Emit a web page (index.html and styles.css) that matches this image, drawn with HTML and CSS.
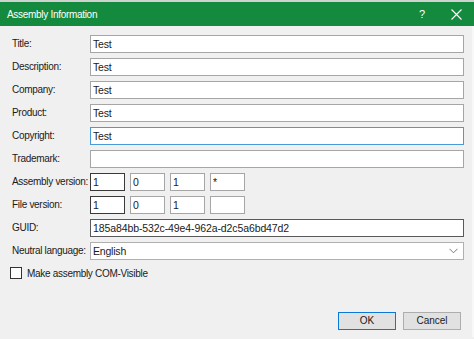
FILE: index.html
```html
<!DOCTYPE html>
<html>
<head>
<meta charset="utf-8">
<link rel="stylesheet" href="styles.css">
</head>
<body>
<div class="dialog">
  <div class="titlebar">
    <span class="title">Assembly Information</span>
    <span class="help">?</span>
    <span class="close"><svg width="11" height="11" viewBox="0 0 11 11"><path d="M0.5 0.5 L10.5 10.5 M10.5 0.5 L0.5 10.5" stroke="#fff" stroke-width="1.1" fill="none"/></svg></span>
  </div>
  <div class="content">
    <div class="form">
      <label class="lbl">Title:</label>
      <div class="field">Test</div>
      <label class="lbl">Description:</label>
      <div class="field">Test</div>
      <label class="lbl">Company:</label>
      <div class="field">Test</div>
      <label class="lbl">Product:</label>
      <div class="field">Test</div>
      <label class="lbl">Copyright:</label>
      <div class="field focus">Test</div>
      <label class="lbl">Trademark:</label>
      <div class="field"></div>
      <label class="lbl">Assembly version:</label>
      <div class="versions">
        <div class="vbox dark">1</div>
        <div class="vbox">0</div>
        <div class="vbox">1</div>
        <div class="vbox">*</div>
      </div>
      <label class="lbl">File version:</label>
      <div class="versions">
        <div class="vbox dark">1</div>
        <div class="vbox">0</div>
        <div class="vbox">1</div>
        <div class="vbox"></div>
      </div>
      <label class="lbl">GUID:</label>
      <div class="field dark">185a84bb-532c-49e4-962a-d2c5a6bd47d2</div>
      <label class="lbl">Neutral language:</label>
      <div class="field select"><span>English</span><svg width="9" height="6" viewBox="0 0 9 6"><path d="M0.5 0.8 L4.5 4.8 L8.5 0.8" stroke="#777" stroke-width="1" fill="none"/></svg></div>
    </div>
    <div class="check-row">
      <span class="checkbox"></span>
      <span class="check-label">Make assembly COM-Visible</span>
    </div>
    <div class="buttons">
      <div class="btn default">OK</div>
      <div class="btn">Cancel</div>
    </div>
  </div>
</div>
</body>
</html>
```
FILE: styles.css
```css
html, body {
  margin: 0;
  padding: 0;
}
body {
  width: 474px;
  height: 339px;
  background: #f0f0f0;
  font-family: "Liberation Sans", Arial, sans-serif;
  font-size: 10px;
  letter-spacing: -0.3px;
  color: #1a1a1a;
  overflow: hidden;
}
.dialog {
  border-top: 2px solid #cfd3cf;
  height: 337px;
  box-sizing: border-box;
  display: flex;
  flex-direction: column;
}
.titlebar {
  height: 24px;
  background: #138a3e;
  color: #fff;
  display: flex;
  align-items: center;
  padding-left: 7px;
  font-size: 10px;
}
.title {
  flex: 1;
}
.help {
  width: 12px;
  margin-right: 20px;
  font-size: 11px;
}
.close {
  width: 14px;
  margin-right: 9px;
  display: flex;
  align-items: center;
}
.content {
  flex: 1;
  padding: 9px 11px 0 12px;
  display: flex;
  flex-direction: column;
  border-right: 2px solid #f8f8f8;
}
.form {
  display: grid;
  grid-template-columns: 78px 374px;
  grid-auto-rows: 18px;
  row-gap: 5px;
  align-items: center;
}
.lbl {
  white-space: nowrap;
  line-height: 18px;
}
.field {
  height: 18px;
  box-sizing: border-box;
  border: 1px solid #a6a6a6;
  background: #fff;
  padding-left: 2px;
  line-height: 16px;
  white-space: nowrap;
  font-size: 10.5px;
  letter-spacing: -0.2px;
}
.field.focus {
  border-color: #4a9ad8;
}
.field.dark {
  border-color: #5a5a5a;
  letter-spacing: -0.1px;
}
.field.select {
  display: flex;
  align-items: center;
  justify-content: space-between;
  padding-right: 5px;
  border-color: #b0b0b0;
}
.versions {
  display: flex;
  gap: 5px;
}
.vbox {
  width: 35px;
  height: 18px;
  box-sizing: border-box;
  border: 1px solid #a6a6a6;
  background: #fff;
  padding-left: 2px;
  line-height: 16px;
  font-size: 10.5px;
}
.vbox.dark {
  border-color: #3a3a3a;
}
.check-row {
  margin-top: 7px;
  margin-left: -2px;
  display: flex;
  align-items: center;
  height: 12px;
}
.checkbox {
  width: 12px;
  height: 12px;
  box-sizing: border-box;
  border: 1px solid #333;
  background: #fff;
  margin-right: 5px;
}
.buttons {
  margin-top: 33px;
  display: flex;
  justify-content: flex-end;
  gap: 7px;
}
.btn {
  width: 58px;
  height: 18px;
  box-sizing: border-box;
  border: 1px solid #adadad;
  background: #e1e1e1;
  text-align: center;
  line-height: 16px;
  letter-spacing: 0;
}
.btn.default {
  border-color: #0a78d7;
}
```
